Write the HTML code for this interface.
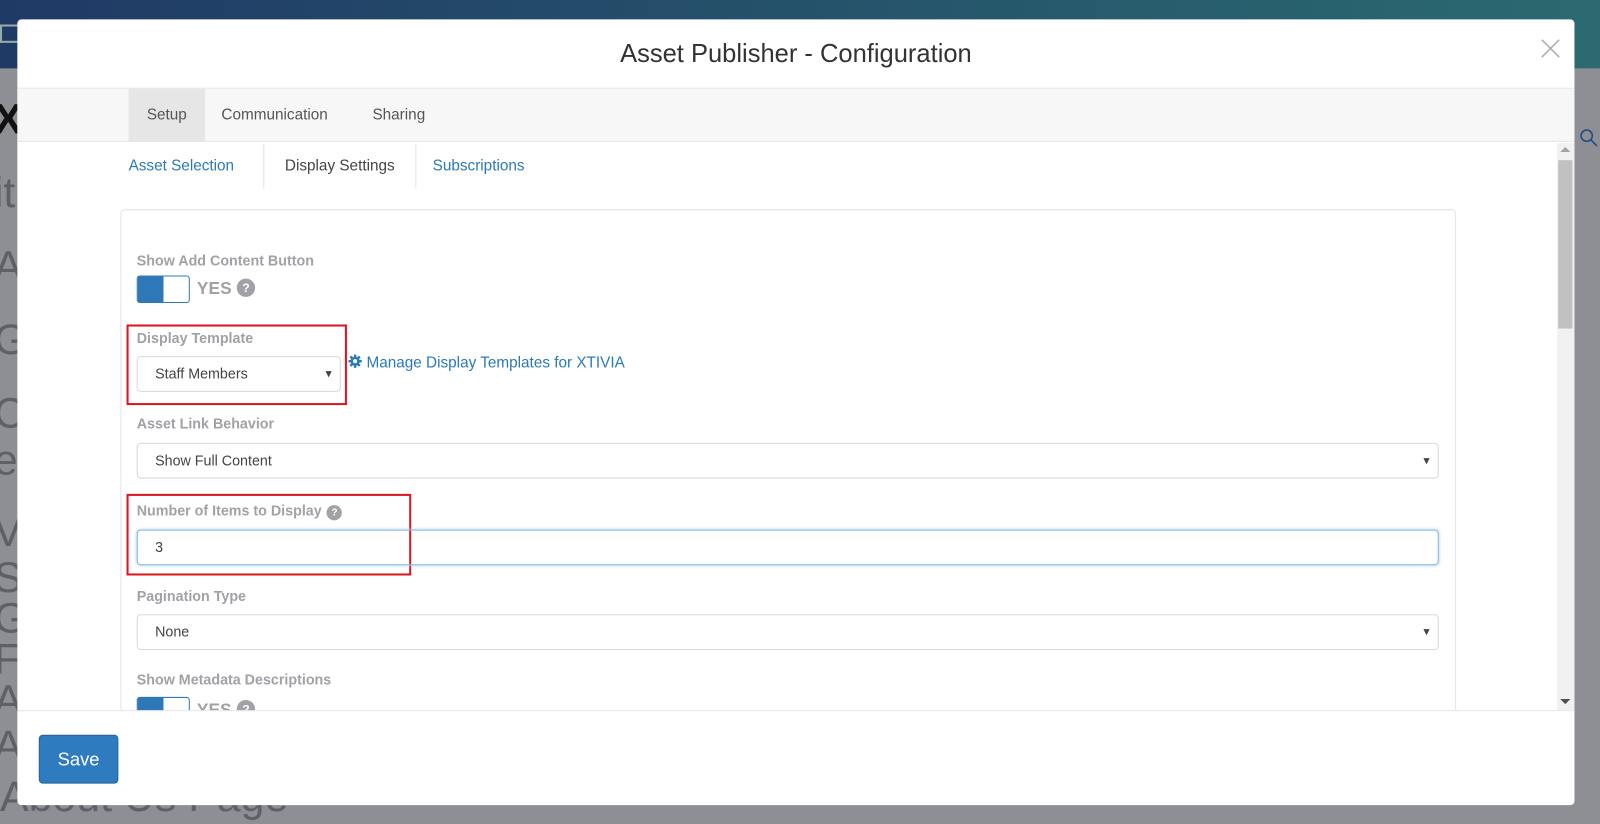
<!DOCTYPE html>
<html><head><style>
*{box-sizing:border-box;margin:0;padding:0}
body{width:1600px;height:824px;overflow:hidden;position:relative;background:#8d8f94;font-family:"Liberation Sans",sans-serif}
#w{position:absolute;left:0;top:0;width:1568px;height:808px;transform:scale(1.0204);transform-origin:0 0}
.top{position:absolute;left:0;top:0;width:1568px;height:67px;background:linear-gradient(90deg,#203a66,#2a6a70)}
.bgtxt{position:absolute;left:-6px;color:#5d6066;font-size:42px;line-height:42px}
.modal{position:absolute;left:17px;top:19px;width:1526px;height:770px;background:#fff;border-radius:4px;overflow:hidden}
.hdr{height:68px;border-bottom:1px solid #e5e5e5;text-align:center;font-size:25px;color:#333;line-height:68px}
.close{position:absolute;right:14px;top:19px;width:19px;height:19px}
.nav{position:absolute;top:68px;left:0;right:0;height:52px;background:#f7f7f7;border-bottom:1px solid #e5e5e5}
.nav span{position:absolute;top:0;height:52px;line-height:52px;font-size:15px;color:#555}
.body{position:absolute;top:121px;left:0;right:0;height:556px;overflow:hidden}
.tabs span{position:absolute;top:0;height:44px;line-height:44px;font-size:15px;color:#2a7ab8}
.panel{position:absolute;left:101px;top:65px;width:1309px;height:520px;border:1px solid #e3e3e3;border-radius:4px}
.lbl{position:absolute;left:117px;font-size:14px;font-weight:bold;color:#a0a2a6}
.sel{position:absolute;left:117px;height:35px;border:1px solid #d8d8d8;border-radius:4px;font-size:14px;color:#444;line-height:33px;padding-left:17px}
.dd:after{content:"▾";position:absolute;right:8px;top:0;font-size:12px;color:#444}
.tog{position:absolute;left:117px;width:52px;height:27px;border:1px solid #2f78b8;border-radius:3px;background:linear-gradient(90deg,#2f78b8 50%,#fff 50%)}
.yes{position:absolute;left:176px;font-size:17px;font-weight:bold;color:#a0a2a6}
.q{display:inline-block;width:18px;height:18px;border-radius:50%;background:#a0a2a6;color:#fff;font-size:12px;text-align:center;line-height:18px;vertical-align:2px;margin-left:5px}
.red{position:absolute;border:2px solid #d9171f}
.sb{position:absolute;right:0;top:0;width:17px;height:556px;background:#f1f1f1}
.foot{position:absolute;top:677px;left:0;right:0;height:93px;border-top:1px solid #e5e5e5}
.save{position:absolute;left:21px;top:23px;width:78px;height:48px;background:#2f7bbf;border:1px solid #24639a;border-radius:4px;color:#fff;font-size:18px;line-height:46px;text-align:center}
</style></head><body><div id="w">
<div class="top"></div>
<div style="position:absolute;left:0;top:24px;width:17px;height:18px;border:2px solid #9aa;border-right:none"></div>
<div class="bgtxt" style="top:96px;color:#111;font-weight:bold">X</div>
<div class="bgtxt" style="top:168px">it</div>
<div class="bgtxt" style="top:240px">Ac</div>
<div class="bgtxt" style="top:312px">Gc</div>
<div class="bgtxt" style="top:384px">Co</div>
<div class="bgtxt" style="top:430px">ee</div>
<div class="bgtxt" style="top:500px">Vi</div>
<div class="bgtxt" style="top:545px">Sr</div>
<div class="bgtxt" style="top:585px">Gl</div>
<div class="bgtxt" style="top:625px">Fo</div>
<div class="bgtxt" style="top:665px">Ar</div>
<div class="bgtxt" style="top:710px">Al</div>
<div class="bgtxt" style="top:760px;left:0">About Us Page</div>
<svg style="position:absolute;left:1548px;top:126px" width="18" height="18" viewBox="0 0 18 18"><circle cx="7" cy="7" r="5.5" fill="none" stroke="#234d86" stroke-width="1.6"/><path d="M11 11L17 17" stroke="#234d86" stroke-width="1.6"/></svg>
<div class="modal">
 <div class="hdr">Asset Publisher - Configuration</div>
 <svg class="close" viewBox="0 0 20 20"><path d="M1 1L19 19M19 1L1 19" stroke="#aaa" stroke-width="1.5"/></svg>
 <div class="nav">
  <span style="left:109px;width:75px;background:#e6e6e6;text-align:center">Setup</span>
  <span style="left:200px">Communication</span>
  <span style="left:348px">Sharing</span>
 </div>
 <div class="body">
  <div class="tabs">
   <span style="left:109px;top:1px">Asset Selection</span>
   <span style="left:241px;width:150px;border-left:1px solid #e3e3e3;border-right:1px solid #e3e3e3;color:#444;text-align:center;top:1px">Display Settings</span>
   <span style="left:407px;top:1px">Subscriptions</span>
  </div>
  <div class="panel"></div>
  <div class="lbl" style="top:107px">Show Add Content Button</div>
  <div class="tog" style="top:130px"></div>
  <div class="yes" style="top:133px">YES<span class="q">?</span></div>
  <div class="red" style="left:107px;top:178px;width:216px;height:79px"></div>
  <div class="lbl" style="top:183px">Display Template</div>
  <div class="sel dd" style="top:209px;width:200px">Staff Members</div>
  <div style="position:absolute;left:324px;top:207px;font-size:15px;color:#2a7ab8"><svg width="14" height="14" viewBox="0 0 14 14" style="vertical-align:-1px"><g fill="#2a7ab8"><circle cx="7" cy="7" r="4.5"/><rect x="5.8" y="0.5" width="2.4" height="13"/><rect x="0.5" y="5.8" width="13" height="2.4"/><rect x="5.8" y="0.5" width="2.4" height="13" transform="rotate(45 7 7)"/><rect x="5.8" y="0.5" width="2.4" height="13" transform="rotate(-45 7 7)"/></g><circle cx="7" cy="7" r="2" fill="#fff"/></svg> Manage Display Templates for XTIVIA</div>
  <div class="lbl" style="top:267px">Asset Link Behavior</div>
  <div class="sel dd" style="top:294px;width:1276px">Show Full Content</div>
  <div class="red" style="left:107px;top:344px;width:279px;height:80px"></div>
  <div class="lbl" style="top:352px">Number of Items to Display<span class="q" style="width:15px;height:15px;line-height:15px;font-size:10px;vertical-align:0">?</span></div>
  <div class="sel" style="top:379px;width:1276px;border-color:#80b5e0;box-shadow:0 0 3px #a9cdeb">3</div>
  <div class="lbl" style="top:436px">Pagination Type</div>
  <div class="sel dd" style="top:462px;width:1276px">None</div>
  <div class="lbl" style="top:518px">Show Metadata Descriptions</div>
  <div class="tog" style="top:543px"></div>
  <div class="yes" style="top:546px">YES<span class="q">?</span></div>
  <div class="sb"><div style="position:absolute;left:3px;top:4px;width:0;height:0;border:5px solid transparent;border-bottom-color:#a3a3a3;border-top:0"></div><div style="position:absolute;left:1px;top:17px;width:14px;height:165px;background:#c1c1c1"></div><div style="position:absolute;left:3px;bottom:6px;width:0;height:0;border:5px solid transparent;border-top-color:#505050;border-bottom:0"></div></div>
 </div>
 <div class="foot"><div class="save">Save</div></div>
</div>
</div></body></html>
